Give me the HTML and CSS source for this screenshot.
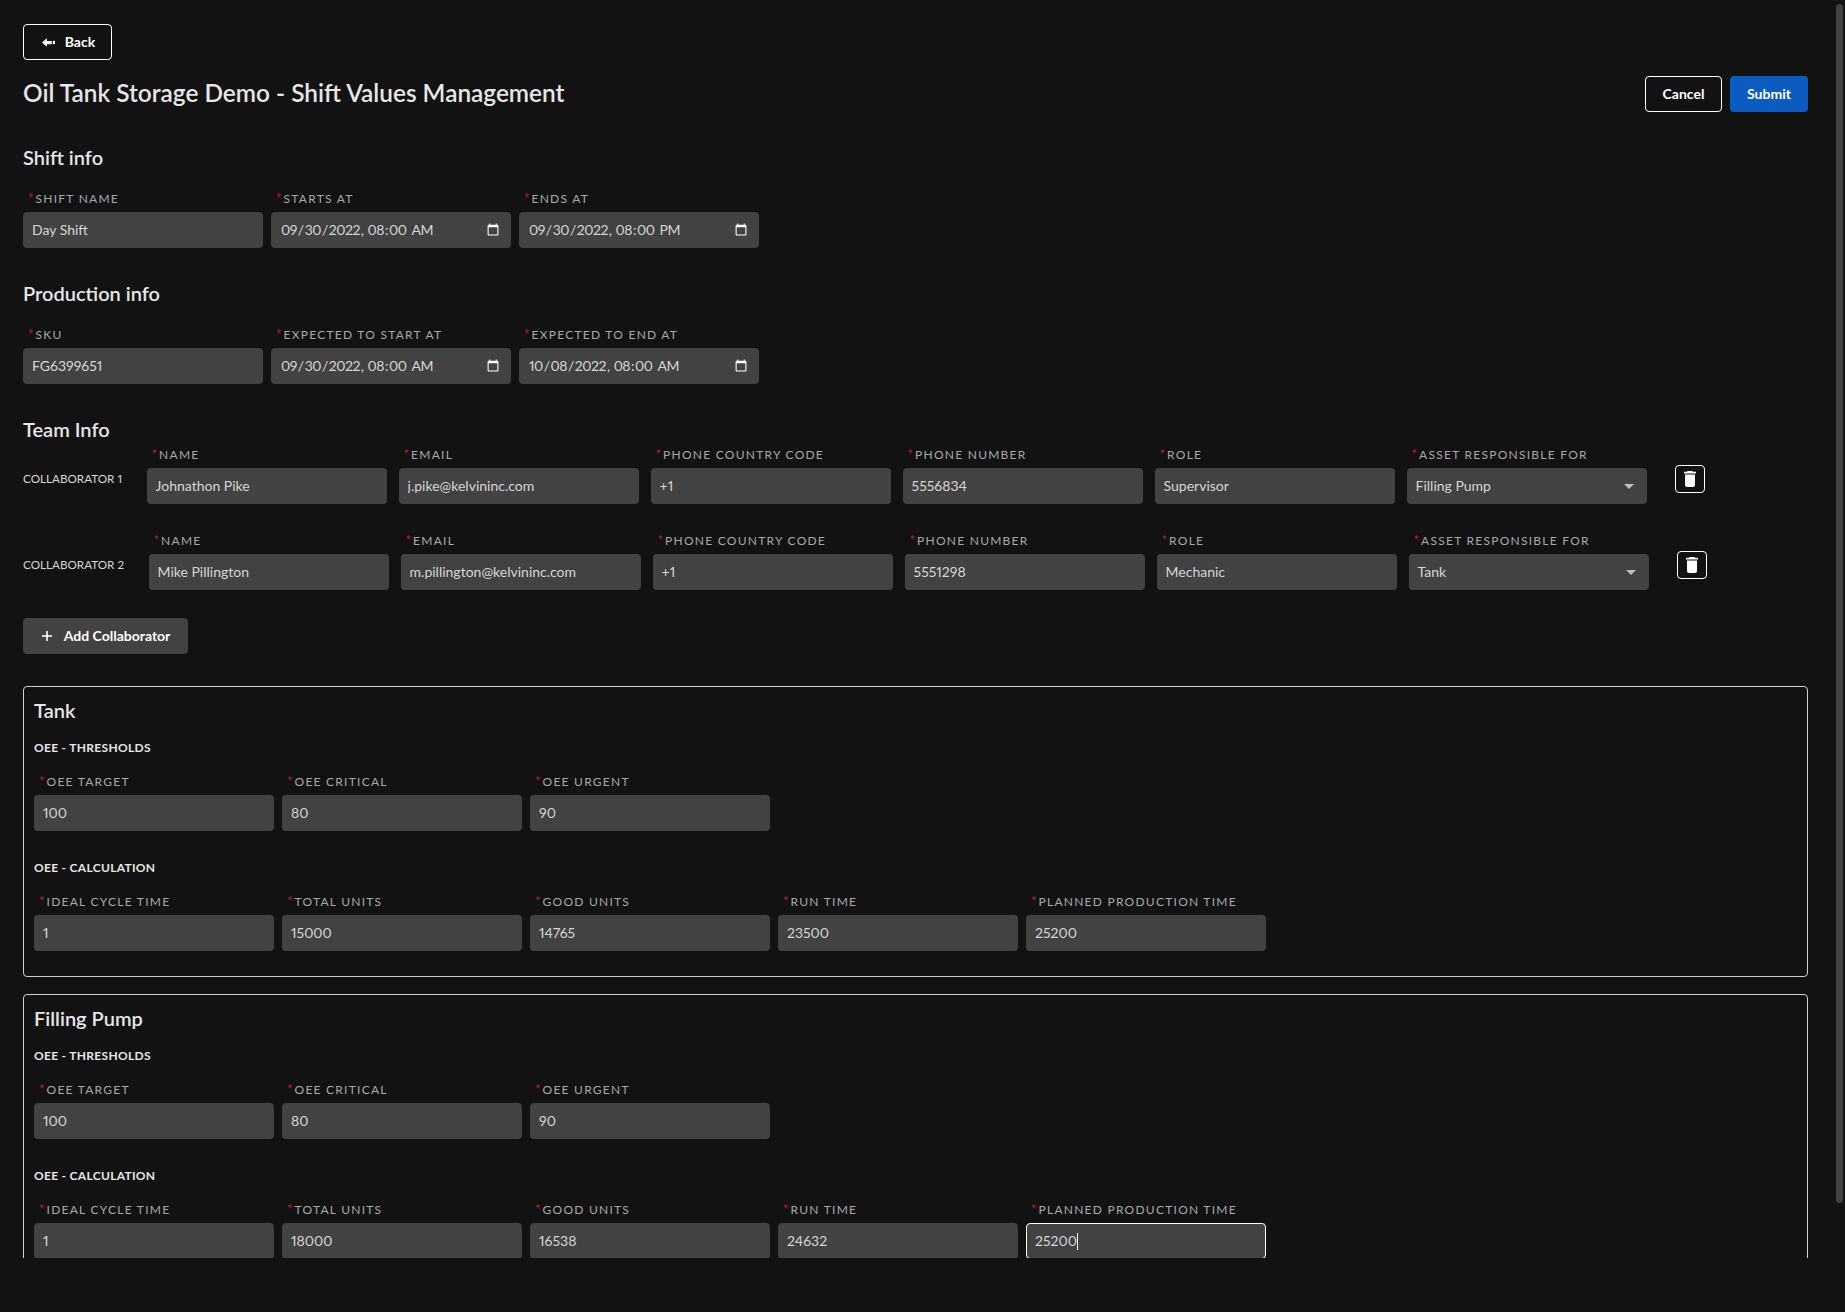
FILE: index.html
```html
<!DOCTYPE html>
<html lang="en">
<head>
<meta charset="utf-8">
<title>Shift Values Management</title>
<link rel="stylesheet" href="styles.css">
</head>
<body>
<div class="app">
  <main class="scroller">
    <button class="btn btn-outline btn-back">
      <svg class="icon-back" width="13" height="9" viewBox="0 0 12 8"><path d="M0 4 4.5 0V2.5H9V5.5H4.5V8Z" fill="#fff"/><rect x="10" y="2.5" width="2" height="3" fill="#fff"/></svg>
      Back
    </button>
    <div class="title-row">
      <h1 class="title">Oil Tank Storage Demo - Shift Values Management</h1>
      <div class="actions">
        <button class="btn btn-outline">Cancel</button>
        <button class="btn btn-primary">Submit</button>
      </div>
    </div>

    <section class="section">
      <h2 class="heading">Shift info</h2>
      <div class="fields">
        <div class="field"><label class="label"><span class="req">*</span>Shift name</label><input class="input" value="Day Shift"></div>
        <div class="field"><label class="label"><span class="req">*</span>Starts at</label><input class="input date" type="datetime-local" value="2022-09-30T08:00"></div>
        <div class="field"><label class="label"><span class="req">*</span>Ends at</label><input class="input date" type="datetime-local" value="2022-09-30T20:00"></div>
      </div>
    </section>

    <section class="section">
      <h2 class="heading">Production info</h2>
      <div class="fields">
        <div class="field"><label class="label"><span class="req">*</span>SKU</label><input class="input" value="FG6399651"></div>
        <div class="field"><label class="label"><span class="req">*</span>Expected to start at</label><input class="input date" type="datetime-local" value="2022-09-30T08:00"></div>
        <div class="field"><label class="label"><span class="req">*</span>Expected to end at</label><input class="input date" type="datetime-local" value="2022-10-08T08:00"></div>
      </div>
    </section>

    <section class="team">
      <h2 class="heading">Team Info</h2>
      <div class="collab">
        <div class="collab-name">Collaborator 1</div>
        <div class="field"><label class="label"><span class="req">*</span>Name</label><input class="input" value="Johnathon Pike"></div>
        <div class="field"><label class="label"><span class="req">*</span>Email</label><input class="input" value="j.pike@kelvininc.com"></div>
        <div class="field"><label class="label"><span class="req">*</span>Phone country code</label><input class="input" value="+1"></div>
        <div class="field"><label class="label"><span class="req">*</span>Phone number</label><input class="input" value="5556834"></div>
        <div class="field"><label class="label"><span class="req">*</span>Role</label><input class="input" value="Supervisor"></div>
        <div class="field"><label class="label"><span class="req">*</span>Asset responsible for</label><div class="input select"><span>Filling Pump</span><i class="tri"></i></div></div>
        <button class="trash"><svg width="12" height="16" viewBox="0 0 12 16"><path d="M3.5 0H8.5L9 .8H12V2.5H0V.8H3Z" fill="#fff"/><path d="M1 3.5H11V14A2 2 0 0 1 9 16H3A2 2 0 0 1 1 14Z" fill="#fff"/></svg></button>
      </div>
      <div class="collab">
        <div class="collab-name">Collaborator 2</div>
        <div class="field"><label class="label"><span class="req">*</span>Name</label><input class="input" value="Mike Pillington"></div>
        <div class="field"><label class="label"><span class="req">*</span>Email</label><input class="input" value="m.pillington@kelvininc.com"></div>
        <div class="field"><label class="label"><span class="req">*</span>Phone country code</label><input class="input" value="+1"></div>
        <div class="field"><label class="label"><span class="req">*</span>Phone number</label><input class="input" value="5551298"></div>
        <div class="field"><label class="label"><span class="req">*</span>Role</label><input class="input" value="Mechanic"></div>
        <div class="field"><label class="label"><span class="req">*</span>Asset responsible for</label><div class="input select"><span>Tank</span><i class="tri"></i></div></div>
        <button class="trash"><svg width="12" height="16" viewBox="0 0 12 16"><path d="M3.5 0H8.5L9 .8H12V2.5H0V.8H3Z" fill="#fff"/><path d="M1 3.5H11V14A2 2 0 0 1 9 16H3A2 2 0 0 1 1 14Z" fill="#fff"/></svg></button>
      </div>
      <button class="btn btn-fill">
        <svg width="12" height="12" viewBox="0 0 12 12"><path d="M6 1V11M1 6H11" stroke="#fff" stroke-width="1.6"/></svg>
        Add Collaborator
      </button>
    </section>

    <section class="card">
      <h2 class="heading">Tank</h2>
      <h3 class="subheading">OEE - Thresholds</h3>
      <div class="fields">
        <div class="field"><label class="label"><span class="req">*</span>OEE target</label><input class="input" value="100"></div>
        <div class="field"><label class="label"><span class="req">*</span>OEE critical</label><input class="input" value="80"></div>
        <div class="field"><label class="label"><span class="req">*</span>OEE urgent</label><input class="input" value="90"></div>
      </div>
      <h3 class="subheading later">OEE - Calculation</h3>
      <div class="fields">
        <div class="field"><label class="label"><span class="req">*</span>Ideal cycle time</label><input class="input" value="1"></div>
        <div class="field"><label class="label"><span class="req">*</span>Total units</label><input class="input" value="15000"></div>
        <div class="field"><label class="label"><span class="req">*</span>Good units</label><input class="input" value="14765"></div>
        <div class="field"><label class="label"><span class="req">*</span>Run time</label><input class="input" value="23500"></div>
        <div class="field"><label class="label"><span class="req">*</span>Planned production time</label><input class="input" value="25200"></div>
      </div>
    </section>

    <section class="card">
      <h2 class="heading">Filling Pump</h2>
      <h3 class="subheading">OEE - Thresholds</h3>
      <div class="fields">
        <div class="field"><label class="label"><span class="req">*</span>OEE target</label><input class="input" value="100"></div>
        <div class="field"><label class="label"><span class="req">*</span>OEE critical</label><input class="input" value="80"></div>
        <div class="field"><label class="label"><span class="req">*</span>OEE urgent</label><input class="input" value="90"></div>
      </div>
      <h3 class="subheading later">OEE - Calculation</h3>
      <div class="fields">
        <div class="field"><label class="label"><span class="req">*</span>Ideal cycle time</label><input class="input" value="1"></div>
        <div class="field"><label class="label"><span class="req">*</span>Total units</label><input class="input" value="18000"></div>
        <div class="field"><label class="label"><span class="req">*</span>Good units</label><input class="input" value="16538"></div>
        <div class="field"><label class="label"><span class="req">*</span>Run time</label><input class="input" value="24632"></div>
        <div class="field"><label class="label"><span class="req">*</span>Planned production time</label><div class="input focused"><span>25200</span><i class="caret"></i></div></div>
      </div>
    </section>
  </main>
  <div class="scroll-thumb"></div>
</div>
</body>
</html>
```
FILE: styles.css
```css
* { box-sizing: border-box; }
html, body { margin: 0; height: 100%; background: #121212; }
body { font-family: "Lato", "Liberation Sans", sans-serif; font-variant-numeric: proportional-nums; color: #e6e6e6; color-scheme: dark; overflow: hidden; }
.app { position: relative; height: 1312px; overflow: hidden; }
.scroller { height: 1258px; overflow: hidden; padding: 24px 37px 0 23px; }
.scroll-thumb { position: absolute; top: 4px; right: 2px; width: 7px; height: 1199px; border-radius: 4px; background: #424242; }

.btn { display: inline-flex; align-items: center; justify-content: center; height: 36px; padding: 0 16px; border-radius: 4px; font: 700 14px/1 "Lato", sans-serif; color: #fff; cursor: pointer; }
.btn-outline { background: transparent; border: 1px solid #fff; }
.btn-primary { background: #0c5bc0; border: 0; }
.btn-fill { background: #424242; border: 0; gap: 11px; }
.btn-back { width: 89px; gap: 10px; padding: 0 0 0 2px; }

.title-row { display: flex; align-items: center; justify-content: space-between; margin-top: 16px; height: 36px; }
.title { margin: 0 0 2px; font-size: 24.4px; line-height: 32px; font-weight: 600; color: #e6e6e6; }
.actions { display: flex; gap: 8px; }
.actions .btn-outline { width: 77px; padding: 0; }
.actions .btn-primary { width: 78px; padding: 0; }

.section { margin-top: 33px; }
.heading { margin: 0; font-size: 20px; line-height: 24px; font-weight: 600; color: #e6e6e6; }
.section .heading { margin-bottom: 23px; }

.fields { display: flex; gap: 8px; }
.field { display: flex; flex-direction: column; gap: 6px; width: 240px; flex: none; }
.label { display: block; height: 14px; font-size: 12px; line-height: 14px; letter-spacing: 1.25px; text-transform: uppercase; color: #a8a8a8; padding-left: 5px; white-space: nowrap; }
.req { color: #d01515; font-size: 13px; line-height: 0; margin-right: 2px; letter-spacing: 0; }

.input { display: block; width: 100%; height: 36px; padding: 0 9px; background: #424242; border: 0; border-radius: 4px; outline: 0; font: 400 14px/36px "Lato", sans-serif; font-variant-numeric: proportional-nums; color: #d6d6d6; color-scheme: dark; }
.input.date { letter-spacing: -.5px; }
.select { display: flex; align-items: center; justify-content: space-between; }
.tri { width: 0; height: 0; border-left: 5px solid transparent; border-right: 5px solid transparent; border-top: 5px solid #bdbdbd; margin-right: 4px; }
.focused { display: flex; align-items: center; border: 1px solid #fff; padding: 0 8px; }
.caret { display: block; width: 1px; height: 17px; background: #fff; }

.team { margin-top: 33px; }
.team .btn-fill { margin-top: 28px; display: flex; width: 165px; padding: 0; }
.collab { display: flex; align-items: center; gap: 12px; }
.collab + .collab { margin-top: 30px; }
.team .heading + .collab { margin-top: 7px; }
.collab-name { margin: 4px 12.5px 0 0; font-size: 11.7px; line-height: 14px; text-transform: uppercase; color: #d6d6d6; white-space: nowrap; }
.trash { width: 30px; height: 28px; margin: 6px 0 0 16px; padding: 0; display: flex; align-items: center; justify-content: center; background: transparent; border: 1px solid #fff; border-radius: 4px; cursor: pointer; }

.card { margin-top: 17px; padding: 11px 10px 25px; border: 1px solid #d0d0d0; border-radius: 4px; }
.team + .card { margin-top: 32px; }
.subheading { margin: 18px 0 19px; font-size: 12px; line-height: 16px; font-weight: 700; text-transform: uppercase; letter-spacing: .3px; color: #e6e6e6; }
.subheading.later { margin-top: 29px; }
```
